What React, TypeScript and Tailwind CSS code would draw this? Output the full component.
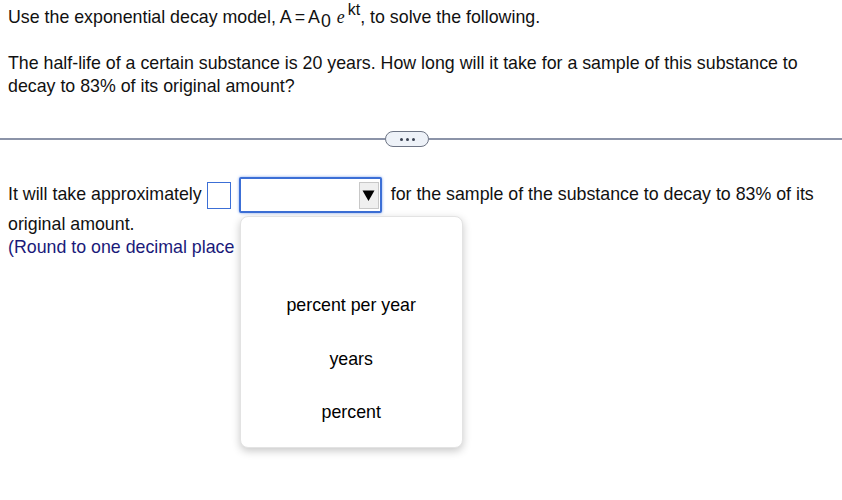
import React from "react";

const font = { fontFamily: '"Liberation Sans", Arial, sans-serif' };

function UnitDropdown() {
  return (
    <span className="relative inline-block align-middle ml-[8px]">
      <span className="flex h-[36px] w-[143px] items-center justify-end rounded-[2px] border-2 border-[#3c6fd6] bg-white pr-[1px] shadow-[0_0_3px_#7da2ec]">
        <span className="flex h-[27px] w-[20px] items-center justify-center border border-[#c8c8c8] bg-[#efefef]">
          <svg width="13" height="13" viewBox="0 0 13 13">
            <path d="M0.5 1.5 H12.5 L6.5 12 Z" fill="#000" />
          </svg>
        </span>
      </span>
      <div className="absolute left-[1px] top-[39px] z-10 flex h-[232px] w-[223px] flex-col items-center rounded-[8px] border border-[#e3e3e3] bg-white pt-[76px] text-black shadow-[0_3px_8px_rgba(0,0,0,0.22)]">
        <div className="h-[54px] leading-[24px]">percent per year</div>
        <div className="h-[53px] leading-[24px]">years</div>
        <div className="leading-[24px]">percent</div>
      </div>
    </span>
  );
}

export default function App() {
  return (
    <div className="h-[500px] w-[842px] bg-white text-[17.8px] text-[#111]" style={font}>
      {/* Instruction */}
      <div className="px-[8px] pt-[6px] leading-[23px]">
        Use the exponential decay model, A
        <span className="mx-[3px]">=</span>A
        <span className="relative top-[4px] ml-[1px]">0</span>
        <span
          className="ml-[6px] italic"
          style={{ fontFamily: '"Liberation Serif", "Times New Roman", serif' }}
        >
          e
        </span>
        <span className="relative top-[-8px] ml-[3px] text-[16px]">kt</span>, to solve the following.
      </div>

      {/* Question */}
      <div className="mt-[23px] px-[8px] leading-[23px]">
        The half-life of a certain substance is 20 years. How long will it take for a sample of this substance to
        <br />
        decay to 83% of its original amount?
      </div>

      {/* Divider with expand pill */}
      <div className="mt-[33px] flex items-center">
        <div className="h-[2px] w-[385px] bg-[#8b93a8]" />
        <div className="flex h-[16px] w-[44px] items-center justify-center gap-[3px] rounded-full border border-[#6d7484] bg-[#eef2f8]">
          <span className="h-[3px] w-[3px] rounded-full bg-[#3b4252]" />
          <span className="h-[3px] w-[3px] rounded-full bg-[#3b4252]" />
          <span className="h-[3px] w-[3px] rounded-full bg-[#3b4252]" />
        </div>
        <div className="h-[2px] flex-1 bg-[#8b93a8]" />
      </div>

      {/* Answer */}
      <div className="mt-[29px] px-[8px]">
        <div className="leading-[36px]">
          It will take approximately
          <span className="ml-[5px] inline-block h-[27px] w-[24px] align-middle border border-[#3c6fd6] bg-white" />
          <UnitDropdown />
          <span className="ml-[9px]">for the sample of the substance to decay to 83% of its</span>
        </div>
        <div className="leading-[23px]">original amount.</div>
        <div className="leading-[23px] text-[#1a1a7a]">(Round to one decimal place</div>
      </div>
    </div>
  );
}
